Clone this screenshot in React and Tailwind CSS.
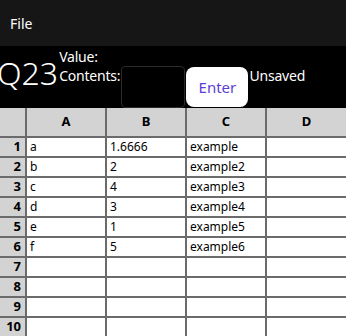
import React from "react";

const cols = ["A", "B", "C", "D"];
const data = [
  ["a", "1.6666", "example", ""],
  ["b", "2", "example2", ""],
  ["c", "4", "example3", ""],
  ["d", "3", "example4", ""],
  ["e", "1", "example5", ""],
  ["f", "5", "example6", ""],
  ["", "", "", ""],
  ["", "", "", ""],
  ["", "", "", ""],
  ["", "", "", ""],
];

const App = () => {
  return (
    <div className="h-[336px] w-[346px] overflow-hidden bg-white font-['Noto_Sans',sans-serif]">
      {/* menu bar */}
      <div className="flex h-[46px] items-center bg-[#161616] px-[10px] text-[14px] text-white">
        File
      </div>

      {/* toolbar */}
      <div className="flex h-[62px] bg-black text-white">
        <span className="-ml-[3px] mt-[7px] text-[32px] font-light leading-[40px]">Q23</span>
        <div className="ml-[1px] flex flex-col text-[14px] leading-[19px] tracking-[-0.2px]">
          <div className="mt-[1px]">Value:</div>
          <div className="flex items-start">
            <span>Contents:</span>
            <input className="ml-[1px] h-[42px] w-[64px] rounded border border-[#2b2b2b] bg-black outline-none" />
            <button className="ml-[1px] mt-[1px] h-[40px] w-[62px] rounded-lg bg-white text-[15px] tracking-normal text-[#5b3fd6]">
              Enter
            </button>
            <span className="ml-[1px]">Unsaved</span>
          </div>
        </div>
      </div>

      {/* sheet */}
      <div className="grid grid-cols-[25px_78px_78px_78px_79px] gap-[2px] bg-[#6b6b6b] text-[12px] text-black">
        <div className="h-[28px] bg-[#d3d3d3]"></div>
        {cols.map((c) => (
          <div key={c} className="flex h-[28px] items-center justify-center bg-[#d3d3d3] text-[13px] font-bold">
            {c}
          </div>
        ))}
        {data.map((row, i) => (
          <React.Fragment key={i}>
            <div className="flex h-[18px] items-center justify-end bg-[#d3d3d3] pr-[4px] text-[13px] font-bold">
              {i + 1}
            </div>
            {row.map((v, j) => (
              <div key={j} className="flex h-[18px] items-center bg-white pl-[3px]">
                {v}
              </div>
            ))}
          </React.Fragment>
        ))}
      </div>
    </div>
  );
};

export default App;
